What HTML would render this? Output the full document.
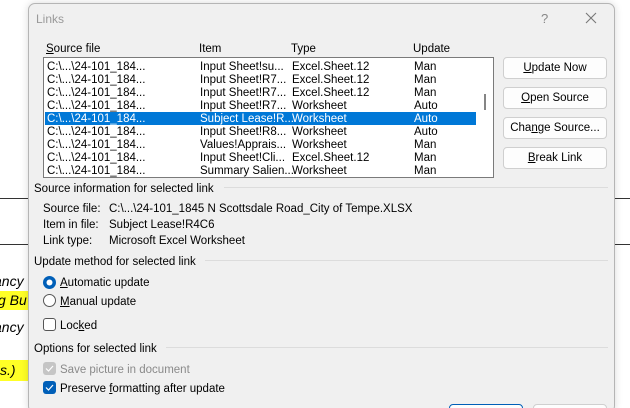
<!DOCTYPE html>
<html><head><style>
*{margin:0;padding:0;box-sizing:border-box}
html,body{width:630px;height:408px;overflow:hidden}
body{background:#fff;font-family:"Liberation Sans",sans-serif;font-size:11.5px;color:#000;position:relative}
.a{position:absolute;white-space:nowrap}
.dlg{position:absolute;left:28px;top:3px;width:587px;height:410px;background:#f0f0f0;border:1px solid #b5b5b5;border-radius:7px;box-shadow:0 0 8px rgba(0,0,0,.15)}
.btn{position:absolute;left:503px;width:104px;height:22px;background:#fdfdfd;border:1px solid #cfcfcf;border-radius:4px;text-align:center;line-height:21px}
.list{position:absolute;left:43px;top:57px;width:451px;height:121px;background:#fff;border:1px solid #7a7a7a}
.row{position:absolute;left:1px;width:431px;height:13px;line-height:14px}
.row span{position:absolute}
.sel{background:#0078d7;color:#fff}
.sec{position:absolute;left:34px;height:1px;background:#dcdcdc}
.hl{background:#ffff26}
u{text-decoration:underline}
.t{position:absolute;top:2px;left:0;right:0;bottom:0}
</style></head><body>
<div class="a" style="left:0;top:198px;width:30px;height:1px;background:#333"></div>
<div class="a" style="left:0;top:244px;width:30px;height:1px;background:#333"></div>
<div class="a" style="left:612px;top:198px;width:18px;height:1px;background:#333"></div>
<div class="a" style="left:612px;top:244px;width:18px;height:1px;background:#333"></div>
<div class="a" style="left:-6px;top:273px;font-style:italic;font-size:14px">ancy</div>
<div class="a hl" style="left:0;top:291px;width:28px;height:19px"></div>
<div class="a" style="left:-2px;top:292px;font-style:italic;font-size:14px">g Bu</div>
<div class="a" style="left:-6px;top:319px;font-style:italic;font-size:14px">ancy</div>
<div class="a hl" style="left:0;top:360px;width:28px;height:21px"></div>
<div class="a" style="left:0;top:362px;font-style:italic;font-size:14px">s.)</div>

<div class="dlg"></div>
<div class="a" style="left:36px;top:12px;color:#999;font-size:12px">Links</div>
<div class="a" style="left:541px;top:11px;color:#888;font-size:13px">?</div>
<svg class="a" style="left:585px;top:12px" width="12" height="12"><path d="M1 1L11 11M11 1L1 11" stroke="#777" stroke-width="1.1"/></svg>

<div class="t">
<div class="a" style="left:46px;top:41px"><u>S</u>ource file</div>
<div class="a" style="left:199px;top:41px">Item</div>
<div class="a" style="left:291px;top:41px">Type</div>
<div class="a" style="left:413px;top:41px">Update</div>
</div>
<div class="list">
<div class="a" style="left:440px;top:36px;width:2px;height:16px;background:#858585"></div>
<div class="row" style="top:2px"><span style="left:2px">C:\...\24-101_184...</span><span style="left:155px">Input Sheet!su...</span><span style="left:247px">Excel.Sheet.12</span><span style="left:369px">Man</span></div>
<div class="row" style="top:15px"><span style="left:2px">C:\...\24-101_184...</span><span style="left:155px">Input Sheet!R7...</span><span style="left:247px">Excel.Sheet.12</span><span style="left:369px">Man</span></div>
<div class="row" style="top:28px"><span style="left:2px">C:\...\24-101_184...</span><span style="left:155px">Input Sheet!R7...</span><span style="left:247px">Excel.Sheet.12</span><span style="left:369px">Man</span></div>
<div class="row" style="top:41px"><span style="left:2px">C:\...\24-101_184...</span><span style="left:155px">Input Sheet!R7...</span><span style="left:247px">Worksheet</span><span style="left:369px">Auto</span></div>
<div class="row sel" style="top:54px"><span style="left:2px">C:\...\24-101_184...</span><span style="left:155px">Subject Lease!R...</span><span style="left:247px">Worksheet</span><span style="left:369px">Auto</span></div>
<div class="row" style="top:67px"><span style="left:2px">C:\...\24-101_184...</span><span style="left:155px">Input Sheet!R8...</span><span style="left:247px">Worksheet</span><span style="left:369px">Auto</span></div>
<div class="row" style="top:80px"><span style="left:2px">C:\...\24-101_184...</span><span style="left:155px">Values!Apprais...</span><span style="left:247px">Worksheet</span><span style="left:369px">Man</span></div>
<div class="row" style="top:93px"><span style="left:2px">C:\...\24-101_184...</span><span style="left:155px">Input Sheet!Cli...</span><span style="left:247px">Excel.Sheet.12</span><span style="left:369px">Man</span></div>
<div class="row" style="top:106px"><span style="left:2px">C:\...\24-101_184...</span><span style="left:155px">Summary Salien...</span><span style="left:247px">Worksheet</span><span style="left:369px">Man</span></div>
</div>
<div class="btn" style="top:57px"><u>U</u>pdate Now</div>
<div class="btn" style="top:87px"><u>O</u>pen Source</div>
<div class="btn" style="top:117px">Cha<u>n</u>ge Source...</div>
<div class="btn" style="top:147px"><u>B</u>reak Link</div>

<div class="t">
<div class="a" style="left:34px;top:181px">Source information for selected link</div>
<div class="a" style="left:43px;top:201px">Source file:</div>
<div class="a" style="left:109px;top:201px">C:\...\24-101_1845 N Scottsdale Road_City of Tempe.XLSX</div>
<div class="a" style="left:43px;top:217px">Item in file:</div>
<div class="a" style="left:109px;top:217px">Subject Lease!R4C6</div>
<div class="a" style="left:43px;top:233px">Link type:</div>
<div class="a" style="left:109px;top:233px">Microsoft Excel Worksheet</div>
<div class="a" style="left:34px;top:254px">Update method for selected link</div>
<div class="a" style="left:60px;top:275px"><u>A</u>utomatic update</div>
<div class="a" style="left:60px;top:294px"><u>M</u>anual update</div>
<div class="a" style="left:60px;top:318px">Loc<u>k</u>ed</div>
<div class="a" style="left:34px;top:341px">Options for selected link</div>
<div class="a" style="left:60px;top:362px;color:#8a8a8a">Save picture in document</div>
<div class="a" style="left:60px;top:381px">Preserve <u>f</u>ormatting after update</div>
</div>
<div class="sec" style="left:224px;top:187px;width:384px"></div>
<div class="sec" style="left:205px;top:260px;width:403px"></div>
<div class="sec" style="left:166px;top:347px;width:442px"></div>
<svg class="a" style="left:43px;top:276px" width="13" height="13"><circle cx="6.5" cy="6.5" r="6.5" fill="#005fb8"/><circle cx="6.5" cy="6.5" r="3" fill="#fff"/></svg>
<svg class="a" style="left:43px;top:294px" width="13" height="13"><circle cx="6.5" cy="6.5" r="6" fill="#fff" stroke="#555"/></svg>
<div class="a" style="left:43px;top:318px;width:13px;height:13px;border:1px solid #555;border-radius:3px;background:#fff"></div>
<svg class="a" style="left:43px;top:362px" width="13" height="13"><rect width="13" height="13" rx="3" fill="#c5c5c5"/><path d="M3 6.5L5.5 9L10 4" stroke="#fff" fill="none" stroke-width="1.2"/></svg>
<svg class="a" style="left:43px;top:381px" width="13" height="13"><rect width="13" height="13" rx="3" fill="#005fb8"/><path d="M3 6.5L5.5 9L10 4" stroke="#fff" fill="none" stroke-width="1.2"/></svg>

<div class="a" style="left:449px;top:404px;width:74px;height:10px;border:1.5px solid #005fb8;border-radius:4px;background:#fdfdfd"></div>
<div class="a" style="left:533px;top:404px;width:74px;height:10px;border:1px solid #cfcfcf;border-radius:4px;background:#fdfdfd"></div>
</body></html>
